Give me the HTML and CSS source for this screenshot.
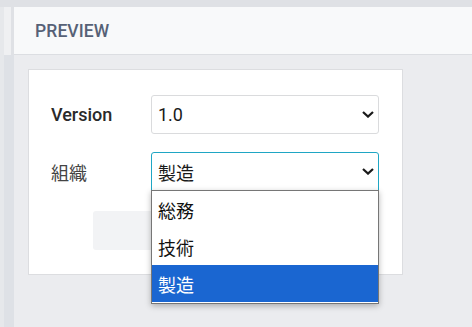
FILE: index.html
```html
<!DOCTYPE html>
<html>
<head>
<meta charset="utf-8">
<link rel="stylesheet" href="styles.css">
</head>
<body>
<div class="top-strip"></div>
<div class="layout">
  <div class="gutter"></div>
  <div class="sidebar">
    <div class="sidebar-top"></div>
    <div class="sidebar-rest"></div>
  </div>
  <div class="main">
    <div class="header"><span class="title">PREVIEW</span></div>
    <div class="content">
      <div class="card">
        <div class="row">
          <div class="label label-bold">Version</div>
          <div class="select">
            <span class="select-text latin">1.0</span>
            <svg class="chev" width="12" height="7" viewBox="0 0 12 7"><path d="M1 1 L6 5.6 L11 1" fill="none" stroke="#1a1a1a" stroke-width="2.2"/></svg>
          </div>
        </div>
        <div class="row">
          <div class="label cjk">組織</div>
          <div class="select select-focus">
            <span class="select-text cjk">製造</span>
            <svg class="chev" width="12" height="7" viewBox="0 0 12 7"><path d="M1 1 L6 5.6 L11 1" fill="none" stroke="#1a1a1a" stroke-width="2.2"/></svg>
            <div class="dropdown">
              <div class="option cjk">総務</div>
              <div class="option cjk">技術</div>
              <div class="option option-selected cjk">製造</div>
            </div>
          </div>
        </div>
        <div class="button-row">
          <div class="button"></div>
        </div>
      </div>
    </div>
  </div>
</div>
</body>
</html>
```

FILE: styles.css
```css
html, body {
  margin: 0;
  padding: 0;
}
body {
  width: 472px;
  height: 327px;
  overflow: hidden;
  background: #ebecef;
  font-family: Roboto, "Noto Sans CJK JP", sans-serif;
}
.top-strip {
  height: 7px;
  background: #dfe1e5;
}
.layout {
  display: flex;
  height: 320px;
}
.gutter {
  width: 4px;
  background: #e6e8eb;
}
.sidebar {
  width: 10px;
  display: flex;
  flex-direction: column;
}
.sidebar-top {
  height: 48px;
  background: #eff0f2;
  border-right: 3px solid #dfe1e5;
  box-sizing: border-box;
}
.sidebar-rest {
  flex: 1;
  background: #dee1e6;
}
.main {
  flex: 1;
  display: flex;
  flex-direction: column;
}
.header {
  height: 47px;
  background: #f8f9fa;
  border-bottom: 1px solid #dcdee2;
  display: flex;
  align-items: center;
  padding-left: 21px;
}
.title {
  font-family: Roboto, sans-serif;
  font-weight: 500;
  font-size: 17.5px;
  color: #566176;
  letter-spacing: 0.1px;
}
.content {
  padding: 14px;
}
.card {
  width: 375px;
  box-sizing: border-box;
  background: #fff;
  border: 1px solid #dcdde0;
  padding: 25px 23px 24px 22px;
  display: flex;
  flex-direction: column;
  gap: 18px;
}
.row {
  display: flex;
  align-items: center;
}
.label {
  width: 100px;
  font-size: 18px;
  color: #444;
}
.label-bold {
  font-family: Roboto, sans-serif;
  font-weight: 500;
  font-size: 18px;
  color: #2a2a2a;
}
.cjk {
  font-family: "Noto Sans CJK JP", sans-serif;
}
.latin {
  font-family: Roboto, sans-serif;
}
.select {
  position: relative;
  width: 228px;
  height: 39px;
  box-sizing: border-box;
  border: 1px solid #dadbdd;
  border-radius: 3px;
  display: flex;
  align-items: center;
  padding-left: 6px;
  background: #fff;
}
.select-focus {
  border-color: #1fa6c4;
  border-radius: 3px 3px 0 0;
}
.select-text {
  flex: 1;
  font-size: 18px;
  color: #1a1a1a;
}
.chev {
  margin-right: 4px;
}
.dropdown {
  position: absolute;
  top: 37px;
  left: -1px;
  width: 228px;
  box-sizing: border-box;
  border: 1px solid #767676;
  background: #fff;
  padding-bottom: 1px;
  box-shadow: 0 2px 6px rgba(0, 0, 0, 0.28);
}
.option {
  height: 37px;
  display: flex;
  align-items: center;
  padding-left: 6px;
  font-size: 18px;
  color: #111;
}
.option-selected {
  background: #1a66d1;
  color: #fff;
}
.button-row {
  display: flex;
  margin-top: 2px;
}
.button {
  margin-left: 42px;
  width: 245px;
  height: 39px;
  background: #f2f3f5;
  border-radius: 3px;
}
```
